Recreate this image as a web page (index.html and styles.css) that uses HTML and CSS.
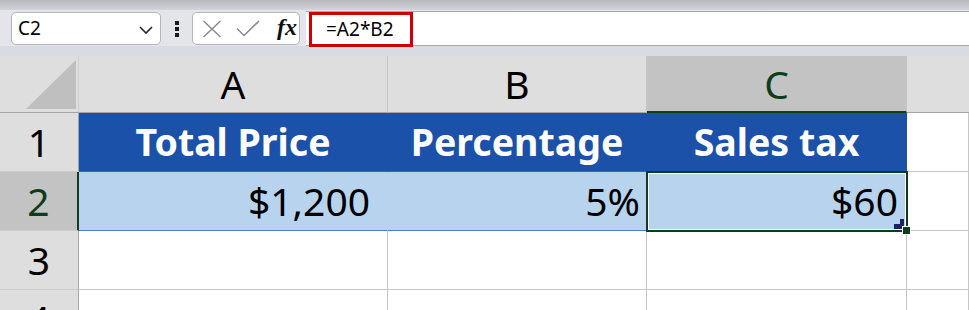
FILE: index.html
```html
<!DOCTYPE html>
<html>
<head>
<meta charset="utf-8">
<link rel="stylesheet" href="styles.css">
</head>
<body>
<div class="app">
  <div class="ribbon-edge"></div>
  <div class="fbar">
    <div class="namebox">
      <span class="name">C2</span>
      <svg class="chev" width="14" height="8" viewBox="0 0 14 8"><polyline points="1,1 7,7 13,1" fill="none" stroke="#222" stroke-width="1.6"/></svg>
    </div>
    <div class="dots"><i></i><i></i><i></i></div>
    <div class="fxbox">
      <svg class="ico-x" width="20" height="18" viewBox="0 0 20 18"><path d="M1.5 1 L18.5 17 M18.5 1 L1.5 17" stroke="#8a8a8a" stroke-width="1.5" fill="none"/></svg>
      <svg class="ico-ok" width="24" height="17" viewBox="0 0 24 17"><polyline points="1,8.5 8,15.5 23,1" fill="none" stroke="#8a8a8a" stroke-width="1.5"/></svg>
      <span class="fx">fx</span>
    </div>
    <div class="finput"></div>
  </div>
  <div class="band"></div>
  <div class="sheet">
    <div class="corner"><svg width="79" height="57" viewBox="0 0 79 57"><polygon points="76,4 76,53 26,53" fill="#bfbfbf"/></svg></div>
    <div class="colhead">A</div>
    <div class="colhead">B</div>
    <div class="colhead sel">C</div>
    <div class="colhead last"></div>

    <div class="rowhead">1</div>
    <div class="cell title">Total Price</div>
    <div class="cell title">Percentage</div>
    <div class="cell title">Sales tax</div>
    <div class="cell"></div>

    <div class="rowhead sel">2</div>
    <div class="cell data pad-a">$1,200</div>
    <div class="cell data pad-b">5%</div>
    <div class="cell data pad-c">$60</div>
    <div class="cell"></div>

    <div class="rowhead">3</div>
    <div class="cell"></div>
    <div class="cell"></div>
    <div class="cell"></div>
    <div class="cell"></div>

    <div class="rowhead">4</div>
    <div class="cell"></div>
    <div class="cell"></div>
    <div class="cell"></div>
    <div class="cell"></div>
  </div>
  <div class="formula-mark">=A2*B2</div>
  <div class="selection">
    <svg class="autofill" width="11" height="10" viewBox="0 0 11 10"><polygon points="6,0 10,0 10,10 0,10 0,5 6,5" fill="#1b206e"/></svg>
    <div class="handle"></div>
  </div>
</div>
</body>
</html>
```

FILE: styles.css
```css
html, body {
  margin: 0;
  padding: 0;
  overflow: hidden;
  background: #ffffff;
}
.app {
  position: relative;
  width: 969px;
  height: 310px;
  overflow: hidden;
  font-family: "Noto Sans", "DejaVu Sans", sans-serif;
}
.ribbon-edge {
  height: 10px;
  background: linear-gradient(#b7b9be, #d2d4d9);
}
.fbar {
  height: 36px;
  background: #e3e5ea;
  display: flex;
  align-items: flex-start;
}
.namebox {
  margin-top: 2px;
  margin-left: 11px;
  width: 150px;
  height: 33px;
  box-sizing: border-box;
  background: #fff;
  border: 1px solid #b5b5b5;
  border-radius: 5px;
  display: flex;
  align-items: center;
  justify-content: space-between;
  padding: 0 7px 0 6px;
}
.name {
  font-size: 19px;
  color: #000;
  line-height: 1;
}
.chev {
  display: block;
  margin-top: 2px;
}
.dots {
  width: 31px;
  height: 33px;
  margin-top: 2px;
  display: flex;
  flex-direction: column;
  align-items: center;
  justify-content: center;
  gap: 2px;
}
.dots i {
  display: block;
  width: 4px;
  height: 4px;
  background: #1a1a1a;
}
.fxbox {
  margin-top: 2px;
  width: 108px;
  height: 33px;
  box-sizing: border-box;
  background: #fff;
  border: 1px solid #b5b5b5;
  border-radius: 5px;
  display: flex;
  align-items: center;
  padding-left: 9px;
}
.ico-x { display: block; }
.ico-ok { display: block; margin-left: 14px; }
.fx {
  margin-left: 17px;
  font-family: "Liberation Serif", "DejaVu Serif", serif;
  font-style: italic;
  font-weight: bold;
  font-size: 24px;
  line-height: 1;
  color: #111;
  margin-top: -3px;
}
.finput {
  margin-top: 1px;
  margin-left: 6px;
  flex: 1;
  height: 35px;
  box-sizing: border-box;
  background: #fff;
  border-top: 1px solid #a9a9a9;
  border-bottom: 1px solid #a9a9a9;
}
.band {
  height: 10px;
  background: #d8dbe2;
}
.sheet {
  display: grid;
  grid-template-columns: 79px 309px 259px 260px 1fr;
  grid-template-rows: 57px 59px 59px 59px 59px;
}
.corner {
  background: #dedede;
  border-right: 1px solid #cfcfcf;
  border-bottom: 1px solid #a5a5a5;
  box-sizing: border-box;
}
.corner svg { display: block; }
.colhead {
  background: #dedede;
  border-right: 1px solid #c6c6c6;
  border-bottom: 1px solid #a5a5a5;
  box-sizing: border-box;
  text-align: center;
  font-size: 39px;
  line-height: 55px;
  color: #000;
}
.colhead.sel {
  background: #c3c3c3;
  color: #0f3b1a;
  border-bottom: 2px solid #143d1e;
}
.colhead.last {
  border-right: none;
}
.rowhead {
  background: #dedede;
  border-right: 1px solid #a5a5a5;
  border-bottom: 1px solid #cccccc;
  box-sizing: border-box;
  text-align: center;
  font-size: 39px;
  line-height: 57px;
  color: #000;
}
.rowhead.sel {
  background: #c3c3c3;
  color: #0f3b1a;
  border-right: 2px solid #143d1e;
}
.cell {
  border-right: 1px solid #c6c6c6;
  border-bottom: 1px solid #c6c6c6;
  box-sizing: border-box;
  font-size: 39px;
  line-height: 57px;
  white-space: nowrap;
  overflow: hidden;
}
.cell.title {
  background: #1c51a9;
  border-right-color: #1c51a9;
  border-bottom-color: #3566b8;
  color: #fff;
  font-weight: bold;
  font-size: 37.5px;
  text-align: center;
}
.cell.data {
  background: #b8d3ee;
  border-right-color: #b8d3ee;
  border-bottom-color: #4f7fc4;
  color: #000;
  text-align: right;
}
.pad-a { padding-right: 17px; }
.pad-b { padding-right: 6px; }
.pad-c { padding-right: 8px; }
.formula-mark {
  position: absolute;
  left: 309px;
  top: 12px;
  width: 104px;
  height: 35px;
  box-sizing: border-box;
  border: 3px solid #d10000;
  background: #fff;
  padding-left: 14px;
  font-size: 19px;
  line-height: 28px;
  color: #000;
}
.selection {
  position: absolute;
  left: 646px;
  top: 171px;
  width: 262px;
  height: 61px;
  box-sizing: border-box;
  border: 2px solid #123a1c;
  box-shadow: inset 0 0 0 1px #ffffff;
}
.autofill {
  position: absolute;
  right: 1px;
  bottom: 1px;
  display: block;
}
.handle {
  position: absolute;
  right: -5px;
  bottom: -5px;
  width: 7px;
  height: 7px;
  background: #123a1c;
  border: 1px solid #ffffff;
}
```
